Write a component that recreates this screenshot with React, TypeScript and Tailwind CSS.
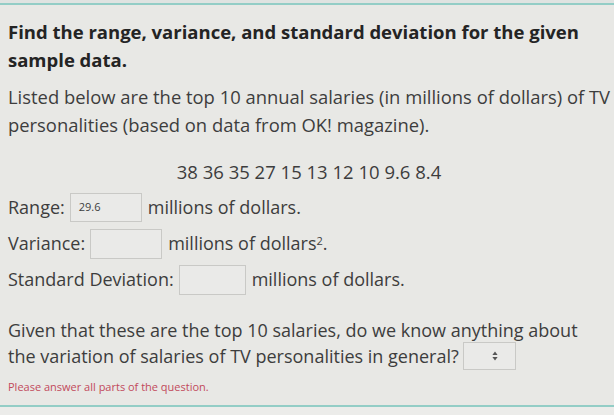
export default function App() {
  return (
    <div className="w-[614px] h-[415px] overflow-hidden bg-[#e8e8e5] font-['Open_Sans',sans-serif] text-[#3d3d3d]">
      <div className="h-[3px] bg-[#dfe3e1]" />
      <div className="h-[2px] bg-[#93cdc6]" />
      <div className="px-2 pt-[13px]">
        <h1 className="text-[18.5px] leading-[28px] font-bold text-[#242424] whitespace-nowrap">
          Find the range, variance, and standard deviation for the given
          <br />
          sample data.
        </h1>
        <p className="mt-[9px] text-[18.4px] leading-[28px] whitespace-nowrap">
          Listed below are the top 10 annual salaries (in millions of dollars) of TV
          <br />
          personalities (based on data from OK! magazine).
        </p>
        <div className="mt-[19px] text-center text-[18.5px] leading-[28px] pl-[4px]">
          38 36 35 27 15 13 12 10 9.6 8.4
        </div>
        <div className="mt-[7px] flex flex-col gap-[7px] text-[18px]">
          <div className="flex items-center h-[29px]">
            <span>Range:</span>
            <div className="ml-[5px] w-[72px] h-[29px] border border-[#c9c9c6] bg-[#eaeae8] flex items-center px-2 text-[11px]">
              29.6
            </div>
            <span className="ml-[6px]">millions of dollars.</span>
          </div>
          <div className="flex items-center h-[29px]">
            <span>Variance:</span>
            <div className="ml-[5px] w-[72px] h-[30px] border border-[#c9c9c6] bg-[#eaeae8]" />
            <span className="ml-[6px]">
              millions of dollars<sup className="text-[11px]">2</sup>.
            </span>
          </div>
          <div className="flex items-center h-[29px]">
            <span>Standard Deviation:</span>
            <div className="ml-[5px] w-[67px] h-[30px] border border-[#c9c9c6] bg-[#eaeae8]" />
            <span className="ml-[6px]">millions of dollars.</span>
          </div>
        </div>
        <p className="mt-[23px] text-[18px] leading-[26px] whitespace-nowrap">
          Given that these are the top 10 salaries, do we know anything about
          <br />
          the variation of salaries of TV personalities in general?
          <span className="inline-flex align-middle ml-[4px] -mt-[4px] w-[53px] h-[28px] border border-[#c9c9c6] bg-[#eaeae8] items-center justify-end pr-[17px]">
            <svg width="6" height="10" viewBox="0 0 6 10" fill="#555">
              <path d="M3 0.5L5.6 4H0.4Z" />
              <path d="M3 9.5L5.6 6H0.4Z" />
            </svg>
          </span>
        </p>
        <div className="mt-[9px] text-[11px] leading-[15px] text-[#c24a5c]">Please answer all parts of the question.</div>
      </div>
      <div className="mt-[11px] h-[2px] bg-[#93cdc6]" />
      <div className="h-[10px] bg-[#ececea]" />
    </div>
  )
}
